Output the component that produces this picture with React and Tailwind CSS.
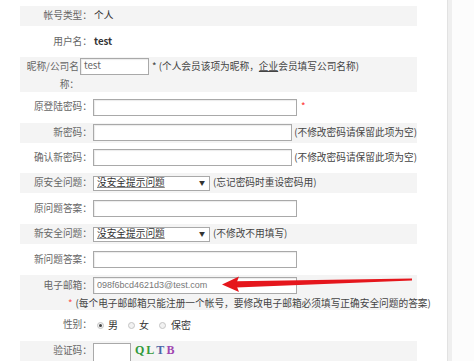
import React from "react";

const label = "w-[72px] shrink-0 text-right text-[#666]";
const input = "h-[17px] border border-[#a9a9a9] bg-white shadow-[inset_1px_1px_1px_rgba(0,0,0,0.08)]";
const hint = "text-[#444] whitespace-nowrap";

function Select() {
  return (
    <div className="ml-[1px] flex h-[15px] w-[117px] items-center justify-between border border-[#a9a9a9] bg-white pl-[3px] pr-[4px]">
      <span className="text-[#333] underline underline-offset-[1px] decoration-[#888]">没安全提示问题</span>
      <span className="text-[6px] text-[#333]">▼</span>
    </div>
  );
}

function Radio({ checked }) {
  return (
    <span className="flex h-[7px] w-[7px] items-center justify-center rounded-full border border-[#c4c4c4] bg-[#f2f2f2]">
      {checked && <span className="h-[3px] w-[3px] rounded-full bg-[#444]" />}
    </span>
  );
}

export default function App() {
  return (
    <div className="relative flex h-[361px] w-[474px] overflow-hidden bg-white font-['Noto_Sans_CJK_SC',sans-serif] text-[9.7px] leading-none">
      <div className="w-[447px] shrink-0 pl-[20px] pt-[6px]">
        <div className="flex w-[397px] flex-col gap-[5.4px]">
          <div className="flex h-[20px] items-center bg-[#f4f4f4]">
            <div className={label}>帐号类型：</div>
            <div className="ml-[2px] text-[#333]">个人</div>
          </div>

          <div className="flex h-[20px] items-center">
            <div className={label}>用户名：</div>
            <div className="ml-[2px] font-bold text-[#333]">test</div>
          </div>

          <div className="flex h-[35px] items-start bg-[#f4f4f4]">
            <div className="w-[59px] shrink-0 text-right leading-[18px] text-[#666]">
              昵称/公司名<br />称：
            </div>
            <div className={`${input} ml-[1px] mt-[1px] flex w-[69px] items-center pl-[3px] text-[#666]`}>test</div>
            <div className={`${hint} ml-[3px] mt-[5px]`}>
              * (个人会员该项为昵称，<span className="underline">企业</span>会员填写公司名称)
            </div>
          </div>

          <div className="flex h-[20px] items-center">
            <div className={label}>原登陆密码：</div>
            <div className={`${input} ml-[1px] w-[204px]`} />
            <span className="ml-[4px] text-[#f33]">*</span>
          </div>

          <div className="flex h-[20px] items-center bg-[#f4f4f4]">
            <div className={label}>新密码：</div>
            <div className={`${input} ml-[1px] w-[204px]`} />
            <span className={`${hint} ml-[2px]`}>(不修改密码请保留此项为空)</span>
          </div>

          <div className="flex h-[20px] items-center">
            <div className={label}>确认新密码：</div>
            <div className={`${input} ml-[1px] w-[204px]`} />
            <span className={`${hint} ml-[2px]`}>(不修改密码请保留此项为空)</span>
          </div>

          <div className="flex h-[20px] items-center bg-[#f4f4f4]">
            <div className={label}>原安全问题：</div>
            <Select />
            <span className={`${hint} ml-[3px]`}>(忘记密码时重设密码用)</span>
          </div>

          <div className="flex h-[20px] items-center">
            <div className={label}>原问题答案：</div>
            <div className={`${input} ml-[1px] w-[204px]`} />
          </div>

          <div className="flex h-[20px] items-center bg-[#f4f4f4]">
            <div className={label}>新安全问题：</div>
            <Select />
            <span className={`${hint} ml-[3px]`}>(不修改不用填写)</span>
          </div>

          <div className="flex h-[20px] items-center">
            <div className={label}>新问题答案：</div>
            <div className={`${input} ml-[1px] w-[204px]`} />
          </div>

          <div className="flex h-[35px] flex-col bg-[#f4f4f4]">
            <div className="flex h-[22px] items-center">
              <div className={label}>电子邮箱：</div>
              <div className={`${input} ml-[1px] flex w-[204px] items-center pl-[3px] font-['Liberation_Sans',sans-serif] text-[9px] text-[#777]`}>
                098f6bcd4621d3@test.com
              </div>
            </div>
            <div className="flex h-[13px] items-center pl-[48px] whitespace-nowrap text-[#444]">
              <span className="mr-[3px] text-[#f55]">*</span>(每个电子邮邮箱只能注册一个帐号，要修改电子邮箱必须填写正确安全问题的答案)
            </div>
          </div>

          <div className="flex h-[20px] items-center">
            <div className={label}>性别：</div>
            <div className="ml-[5px] flex items-center text-[10px] text-[#333]">
              <Radio checked />
              <span className="ml-[4px]">男</span>
              <span className="ml-[10px]"><Radio /></span>
              <span className="ml-[4px]">女</span>
              <span className="ml-[10px]"><Radio /></span>
              <span className="ml-[5px]">保密</span>
            </div>
          </div>

          <div className="flex h-[20px] items-start bg-[#f4f4f4]">
            <div className={`${label} mt-[5px]`}>验证码：</div>
            <div className="ml-[1px] mt-[2px] h-[20px] w-[38px] border border-[#a9a9a9] bg-white" />
            <div className="ml-[4px] mt-[3px] flex gap-[2px] font-['Liberation_Serif',serif] text-[12px] font-bold">
              <span className="text-[#2f9a3c]">Q</span>
              <span className="text-[#3a9a3a]">L</span>
              <span className="text-[#4a68a8]">T</span>
              <span className="text-[#a046b0]">B</span>
            </div>
          </div>
        </div>
      </div>
      <div className="w-[5px] shrink-0 border-l border-[#e2e2e2] bg-[#efefef]" />
      <div className="flex-1 bg-[#fcfcfc]" />

      <svg className="absolute left-0 top-0" width="474" height="361" viewBox="0 0 474 361">
        <polygon points="236,281.2 412,278.4 412,280.6 236,287.4" fill="#e5161c" />
        <polygon points="222,284.5 239,276.5 236,284.3 239,292" fill="#e5161c" />
      </svg>
    </div>
  );
}
